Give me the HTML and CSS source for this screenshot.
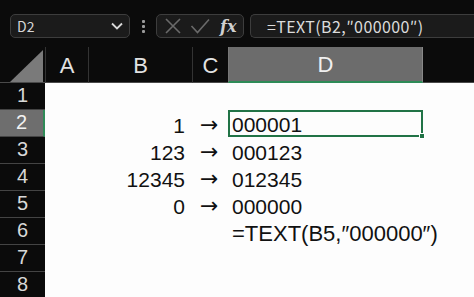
FILE: index.html
```html
<!DOCTYPE html>
<html>
<head>
<meta charset="utf-8">
<link rel="stylesheet" href="styles.css">
</head>
<body>
<div class="app">
  <div class="topbar">
    <div class="namebox">
      <span class="name">D2</span>
      <svg class="chev" width="14" height="10" viewBox="0 0 14 10"><path d="M2 2.5 L7 7.5 L12 2.5" fill="none" stroke="#d8d8d8" stroke-width="1.8"/></svg>
    </div>
    <div class="dots"><i></i><i></i><i></i></div>
    <div class="fxbox">
      <svg width="18" height="18" viewBox="0 0 18 18"><path d="M2 2 L16 16 M16 2 L2 16" stroke="#6a6a6a" stroke-width="1.6" fill="none"/></svg>
      <svg width="20" height="18" viewBox="0 0 20 18"><path d="M1.5 9 L7.5 15.5 L19 2.5" stroke="#6a6a6a" stroke-width="1.6" fill="none"/></svg>
      <span class="fx">fx</span>
    </div>
    <div class="formula">=TEXT(B2,″000000″)</div>
  </div>
  <div class="sheet">
    <div class="corner"><div class="tri"></div></div>
    <div class="colh">A</div>
    <div class="colh">B</div>
    <div class="colh">C</div>
    <div class="colh sel">D</div>
    <div class="colh last"></div>

    <div class="rowh">1</div>
    <div class="cell"></div><div class="cell"></div><div class="cell"></div><div class="cell"></div><div class="cell"></div>

    <div class="rowh sel">2</div>
    <div class="cell"></div><div class="cell num">1</div><div class="cell arrow">→</div><div class="cell val active">000001<span class="handle"></span></div><div class="cell"></div>

    <div class="rowh">3</div>
    <div class="cell"></div><div class="cell num">123</div><div class="cell arrow">→</div><div class="cell val">000123</div><div class="cell"></div>

    <div class="rowh">4</div>
    <div class="cell"></div><div class="cell num">12345</div><div class="cell arrow">→</div><div class="cell val">012345</div><div class="cell"></div>

    <div class="rowh">5</div>
    <div class="cell"></div><div class="cell num">0</div><div class="cell arrow">→</div><div class="cell val">000000</div><div class="cell"></div>

    <div class="rowh">6</div>
    <div class="cell"></div><div class="cell"></div><div class="cell"></div><div class="cell val wide">=TEXT(B5,″000000″)</div><div class="cell"></div>

    <div class="rowh">7</div>
    <div class="cell"></div><div class="cell"></div><div class="cell"></div><div class="cell"></div><div class="cell"></div>

    <div class="rowh">8</div>
    <div class="cell"></div><div class="cell"></div><div class="cell"></div><div class="cell"></div><div class="cell"></div>
  </div>
</div>
</body>
</html>
```
FILE: styles.css
```css
* { box-sizing: border-box; }
html, body { margin: 0; padding: 0; background: #0b0b0b; overflow: hidden; }
.app { width: 474px; height: 297px; overflow: hidden; font-family: "Liberation Sans", Arial, sans-serif; }

.topbar {
  height: 47px;
  display: flex;
  align-items: flex-start;
  padding: 14px 0 0 10px;
  background: #0b0b0b;
}
.namebox {
  width: 120px; height: 24px;
  border: 1px solid #3d3d3d;
  border-radius: 5px;
  background: #1b1b1b;
  display: flex; align-items: center; justify-content: space-between;
  padding: 0 5px 0 6px;
}
.name { color: #d6d6d6; font-family: "Noto Sans CJK JP", sans-serif; font-size: 14px; line-height: 1; }
.dots { width: 26px; height: 24px; display: flex; flex-direction: column; align-items: center; justify-content: center; gap: 2px; }
.dots i { display: block; width: 3px; height: 3px; background: #9a9a9a; border-radius: 1px; }
.fxbox {
  width: 88px; height: 24px;
  border: 1px solid #3d3d3d;
  border-radius: 5px;
  background: #1b1b1b;
  display: flex; align-items: center;
  padding: 0 0 0 7px;
  gap: 8px;
}
.fx { font-family: "DejaVu Serif", serif; font-style: italic; font-weight: bold; color: #d0d0d0; font-size: 16px; margin-left: 2px; }
.formula {
  margin-left: 6px;
  flex: 1; height: 24px;
  border: 1px solid #3d3d3d;
  border-right: none;
  border-radius: 5px 0 0 5px;
  background: #1b1b1b;
  color: #dcdcdc;
  font-family: "Noto Sans CJK JP", sans-serif;
  font-size: 16px;
  line-height: 22px;
  padding-left: 16px;
  letter-spacing: 0.4px;
}

.sheet {
  display: grid;
  grid-template-columns: 45px 43px 104px 36px 195px 51px;
  grid-template-rows: 36px repeat(8, 27px);
  background: #fdfdfd;
}
.corner { background: #0b0b0b; border-bottom: 1px solid #4a4a4a; padding: 3px 2px 1px 10px; }
.tri { width: 33px; height: 32px; background: #7a7a7a; clip-path: polygon(100% 0, 100% 100%, 0 100%); }
.colh {
  background: #0b0b0b;
  color: #e2e2e2;
  font-size: 22px;
  display: flex; align-items: center; justify-content: center;
  border-left: 1px solid #333;
  border-bottom: 1px solid #4a4a4a;
  padding-top: 2px;
}
.colh.sel { background: #6c6c6c; border-bottom: 2px solid #2e8b57; color: #f0f0f0; border-left: 1px solid #777; border-right: 1px solid #888; }
.colh.last { border-left: none; }
.rowh {
  background: #0b0b0b;
  color: #d8d8d8;
  font-size: 20px;
  border-bottom: 1px solid #444;
  display: flex; justify-content: center; align-items: flex-start;
  padding-top: 2px;
  line-height: 1;
}
.rowh.sel { background: #6e6e6e; border-right: 2px solid #2e8b57; color: #f2f2f2; }
.cell {
  position: relative;
  display: flex; align-items: flex-end;
  color: #111;
  font-family: "Liberation Sans", Arial, sans-serif;
  font-size: 21px;
  line-height: 21px;
  padding-bottom: 1px;
  white-space: nowrap;
}
.num { justify-content: flex-end; padding-right: 7px; }
.arrow { padding-left: 8px; font-family: "DejaVu Sans", sans-serif; font-size: 22px; line-height: 22px; padding-bottom: 1px; }
.val { padding-left: 4px; }
.wide { font-size: 22px; line-height: 22px; padding-bottom: 0; }
.active { border: 2px solid #217346; padding-bottom: 0; padding-left: 2px; }
.handle { position: absolute; right: -4px; bottom: -4px; width: 6px; height: 6px; background: #217346; border: 1px solid #fff; }
```
